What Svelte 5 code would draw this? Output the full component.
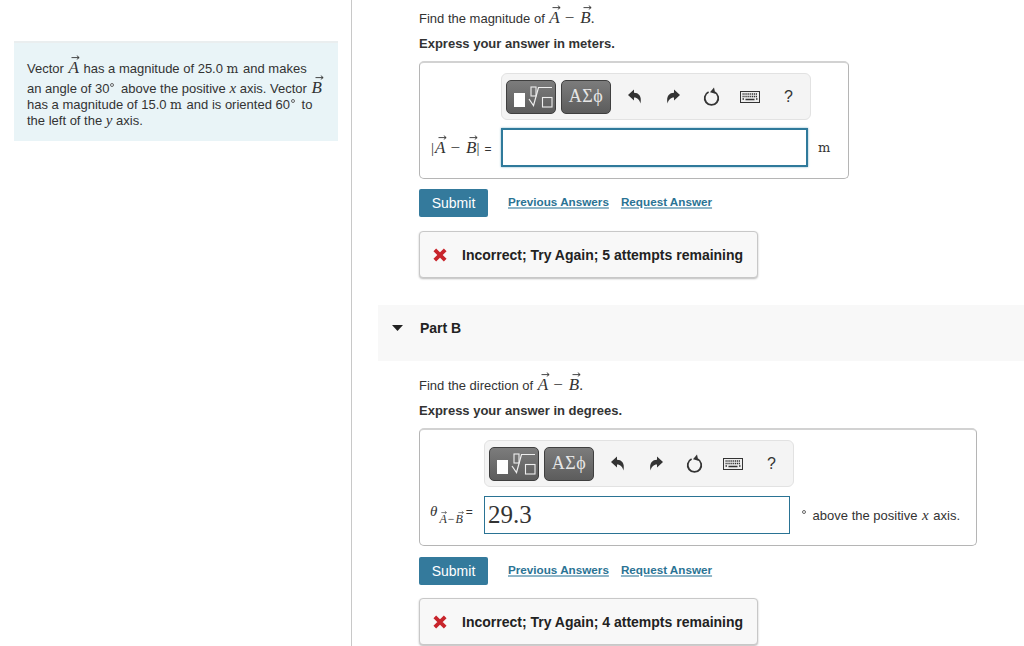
<script>
    const parts = [
        { attempts: 5, value: '', focus: true },
        { attempts: 4, value: '29.3', focus: false }
    ];
</script>

{#snippet vec(letter)}
    <span class="vec"><svg class="arrow" width="9" height="5" viewBox="0 0 9 5"><path d="M0.5 2.6H8M5.8 0.6L8.2 2.6L5.8 4.4" fill="none" stroke="#333" stroke-width="0.9"/></svg><i>{letter}</i></span>
{/snippet}

{#snippet toolbar()}
    <div class="toolbar">
        <button class="tool templates" aria-label="templates">
            <svg width="48" height="32" viewBox="1 1 48 32">
                <rect x="8" y="13" width="11" height="14" fill="#fff"/>
                <rect x="25" y="7" width="5" height="9" fill="none" stroke="#eee" stroke-width="1.1"/>
                <path d="M23 19L27.5 25.5L32.5 7.5H46" fill="none" stroke="#eee" stroke-width="1.2"/>
                <rect x="36.5" y="17.5" width="9.5" height="9.5" fill="none" stroke="#eee" stroke-width="1.1"/>
            </svg>
        </button>
        <button class="tool symbols">ΑΣϕ</button>
        <div class="actions">
            <svg width="14" height="15" viewBox="0 0 14 15"><path d="M0 6L6 0.5V3.8C10.5 3.8 14 7 12.5 14.5C11.5 11 9.5 8.5 6 8.5V11.5Z" fill="#333"/></svg>
            <svg width="14" height="15" viewBox="0 0 14 15"><path d="M14 6L8 0.5V3.8C3.5 3.8 0 7 1.5 14.5C2.5 11 4.5 8.5 8 8.5V11.5Z" fill="#333"/></svg>
            <svg width="17" height="19" viewBox="0 0 17 19"><path d="M5.6 5A6.8 6.8 0 1 0 11.4 5" fill="none" stroke="#333" stroke-width="1.8"/><path d="M11 0.6L7 5.2L12.4 6.8Z" fill="#333"/></svg>
            <svg width="20" height="12" viewBox="0 0 20 12"><rect x="0.5" y="0.5" width="19" height="11" fill="#eee" stroke="#333"/><path d="M2.5 3H17.5M2.5 5.5H17.5" stroke="#333" stroke-width="1.3" stroke-dasharray="1.2 0.7"/><path d="M2.5 8H4M5.5 8.5H14.5M16 8H17.5" stroke="#333" stroke-width="1.3"/></svg>
            <span class="help">?</span>
        </div>
    </div>
{/snippet}

{#snippet after(attempts)}
    <div class="submit-row">
        <button class="submit">Submit</button>
        <a href="#prev">Previous Answers</a>
        <a href="#req">Request Answer</a>
    </div>
    <div class="feedback">
        <svg width="14" height="14" viewBox="0 0 14 14"><path d="M1.8 1.8L12.2 12.2M12.2 1.8L1.8 12.2" stroke="#c8252c" stroke-width="3.8"/></svg>
        <span>Incorrect; Try Again; {attempts} attempts remaining</span>
    </div>
{/snippet}

<div class="page">
    <aside>
        <div class="intro">
            <p class="l1">Vector {@render vec('A')} has a magnitude of 25.0 <span class="rm">m</span> and makes</p>
            <p class="l2">an angle of 30<span class="deg"></span> above the positive <i class="m">x</i> axis. Vector {@render vec('B')}</p>
            <p class="l3">has a magnitude of 15.0 <span class="rm">m</span> and is oriented 60<span class="deg"></span> to</p>
            <p>the left of the <i class="m">y</i> axis.</p>
        </div>
    </aside>

    <main>
        <section class="part-a">
            <p class="find">Find the magnitude of {@render vec('A')}<span class="minus">−</span>{@render vec('B')}<span class="m">.</span></p>
            <p class="express">Express your answer in meters.</p>
            <div class="answer">
                <div class="tool-row first">{@render toolbar()}</div>
                <div class="input-row">
                    <span class="label first">
                        <span class="m">|</span>{@render vec('A')}<span class="minus">−</span>{@render vec('B')}<span class="m">|</span><span class="eq">=</span>
                    </span>
                    <div class="field focus"></div>
                    <span class="unit rm">m</span>
                </div>
            </div>
            {@render after(parts[0].attempts)}
        </section>

        <header class="part-head">
            <svg width="11" height="6" viewBox="0 0 11 6"><path d="M0 0H11L5.5 6Z" fill="#222"/></svg>
            <h2>Part B</h2>
        </header>

        <section class="part-b">
            <p class="find">Find the direction of {@render vec('A')}<span class="minus">−</span>{@render vec('B')}<span class="m">.</span></p>
            <p class="express">Express your answer in degrees.</p>
            <div class="answer wide">
                <div class="tool-row second">{@render toolbar()}</div>
                <div class="input-row">
                    <span class="label second">
                        <i class="theta">θ</i><span class="sub">{@render vec('A')}<span class="minus">−</span>{@render vec('B')}</span><span class="eq">=</span>
                    </span>
                    <div class="field">{parts[1].value}</div>
                    <span class="suffix"><span class="deg"></span> above the positive <i class="m">x</i> axis.</span>
                </div>
            </div>
            {@render after(parts[1].attempts)}
        </section>
    </main>
</div>

<style>
    :global(body) {
        margin: 0;
        background: #fff;
    }
    .page {
        display: flex;
        height: 646px;
        overflow: hidden;
        font-family: "Liberation Sans", Arial, sans-serif;
        font-size: 13px;
        color: #333;
    }
    p {
        margin: 0;
    }
    aside {
        box-sizing: border-box;
        width: 352px;
        flex: none;
        padding: 41px 13px 0 14px;
        border-right: 1px solid #c8c8c8;
    }
    .intro {
        box-sizing: border-box;
        height: 100px;
        padding: 16px 13px 0;
        background: #e9f4f7;
        border-top: 2px solid #eaeeef;
    }
    .intro p {
        height: 16px;
        line-height: 16px;
    }
    .intro .l1 {
        height: 20px;
        line-height: 18px;
    }
    .intro .l2 {
        height: 18px;
    }
    .intro .l3 {
        height: 15px;
    }
    .intro .vec {
        margin-right: 1px;
    }
    .intro .rm {
        font-size: 12.5px;
        margin-right: 1px;
    }
    .deg {
        box-sizing: border-box;
        display: inline-block;
        width: 4px;
        height: 4px;
        margin: 0 3px 0 1px;
        border: 1px solid #666;
        border-radius: 50%;
        vertical-align: 6px;
    }
    .vec {
        position: relative;
        display: inline-block;
        margin-left: 1px;
        font-family: "Liberation Serif", serif;
        font-size: 17px;
        line-height: 1;
    }
    .arrow {
        position: absolute;
        top: -4px;
        left: 3px;
    }
    .m {
        font-family: "Liberation Serif", serif;
        font-size: 15px;
    }
    .rm {
        font-family: "DejaVu Serif", serif;
        font-size: 12.5px;
    }
    .minus {
        font-family: "Liberation Serif", serif;
        font-size: 17px;
        margin: 0 5px;
    }
    main {
        flex: 1;
        min-width: 0;
    }
    section {
        padding-left: 67px;
    }
    .part-a {
        padding-top: 8px;
    }
    .part-b {
        padding-top: 14px;
    }
    .find {
        height: 20px;
        line-height: 20px;
    }
    .express {
        margin-top: 8px;
        font-weight: 700;
        line-height: 15px;
    }
    .answer {
        box-sizing: border-box;
        width: 430px;
        height: 118px;
        margin-top: 10px;
        border: 1px solid #b5b5b5;
        border-top: 2px solid #d2d2d2;
        border-radius: 5px;
    }
    .answer.wide {
        width: 558px;
    }
    .tool-row {
        padding-top: 10px;
    }
    .tool-row.first {
        padding-left: 81px;
    }
    .tool-row.second {
        padding-left: 64px;
    }
    .toolbar {
        box-sizing: border-box;
        display: flex;
        align-items: center;
        gap: 5px;
        width: 310px;
        height: 47px;
        padding-left: 4px;
        background: #f4f4f4;
        border: 1px solid #e2e2e2;
        border-radius: 6px;
    }
    .tool {
        box-sizing: border-box;
        flex: none;
        height: 34px;
        width: 50px;
        padding: 0;
        display: flex;
        align-items: center;
        justify-content: center;
        background: linear-gradient(#7c7c7c, #5c5c5c);
        border: 1px solid #3f3f3f;
        border-radius: 5px;
        color: #e6e6e6;
        font-family: "Liberation Serif", serif;
        font-size: 18px;
        letter-spacing: 0.5px;
    }
    .actions {
        display: grid;
        grid-template-columns: repeat(5, 38.3px);
        justify-items: center;
        align-items: center;
    }
    .help {
        font-size: 16px;
    }
    .input-row {
        display: flex;
        align-items: center;
        margin-top: 8px;
    }
    .part-b .input-row {
        margin-top: 9px;
    }
    .label {
        box-sizing: border-box;
        flex: none;
        white-space: nowrap;
        font-size: 12px;
    }
    .label.first {
        width: 81px;
        padding-left: 11px;
    }
    .label.first .m {
        font-size: 15px;
    }
    .label.first .eq {
        margin-left: 5px;
    }
    .label.second {
        width: 64px;
        padding-left: 10px;
        margin-bottom: 8px;
    }
    .label.second .eq {
        margin-left: 3px;
    }
    .theta {
        font-family: "Liberation Serif", serif;
        font-size: 15px;
    }
    .sub {
        display: inline-block;
        position: relative;
        top: 7px;
        margin-left: 2px;
    }
    .sub .vec {
        margin-left: 0;
        font-size: 12px;
    }
    .sub .minus {
        font-size: 12px;
        margin: 0 1px;
    }
    .sub .arrow {
        width: 6px;
        left: 2px;
        top: -3px;
    }
    .field {
        box-sizing: border-box;
        width: 306px;
        height: 38px;
        padding-left: 3px;
        border: 1px solid #2a7394;
        font-family: "Liberation Serif", serif;
        font-size: 25px;
        line-height: 36px;
        color: #333;
    }
    .field.focus {
        width: 307px;
        height: 39px;
        border: 2px solid #2f7a9b;
        box-shadow: 0 0 2px #7fb0c6;
    }
    .unit {
        margin-left: 10px;
        font-size: 13px;
    }
    .suffix {
        margin-left: 11px;
        font-size: 13px;
        white-space: nowrap;
    }
    .suffix .m {
        margin: 0 1px;
    }
    .submit-row {
        display: flex;
        align-items: center;
        margin-top: 10px;
        height: 28px;
    }
    .part-b .submit-row {
        margin-top: 11px;
    }
    .submit {
        box-sizing: border-box;
        width: 69px;
        height: 28px;
        padding: 0;
        margin-right: 20px;
        background: #347a9c;
        border: 0;
        border-radius: 2px;
        color: #fff;
        font-family: inherit;
        font-size: 14px;
    }
    a {
        margin-right: 12px;
        position: relative;
        top: -2px;
        color: #2a7394;
        font-size: 11.7px;
        font-weight: 700;
        text-decoration: underline;
        text-decoration-color: #8fb6c8;
        text-decoration-thickness: 1.5px;
    }
    .feedback {
        box-sizing: border-box;
        display: flex;
        align-items: center;
        gap: 15px;
        width: 339px;
        height: 47px;
        margin-top: 14px;
        padding: 0 0 0 13px;
        background: #f8f8f8;
        border: 1px solid #c8c8c8;
        border-radius: 4px;
        box-shadow: 0 1px 2px #bbb;
        color: #222;
        font-size: 14px;
        font-weight: 700;
    }
    .feedback span {
        padding-top: 1px;
    }
    .part-b .feedback {
        margin-top: 13px;
    }
    .part-head {
        box-sizing: border-box;
        display: flex;
        align-items: center;
        gap: 17px;
        height: 56px;
        margin: 27px 0 0 26px;
        padding: 0 0 10px 14px;
        background: #f8f8f8;
    }
    h2 {
        margin: 0;
        font-size: 14px;
        color: #222;
    }
</style>
